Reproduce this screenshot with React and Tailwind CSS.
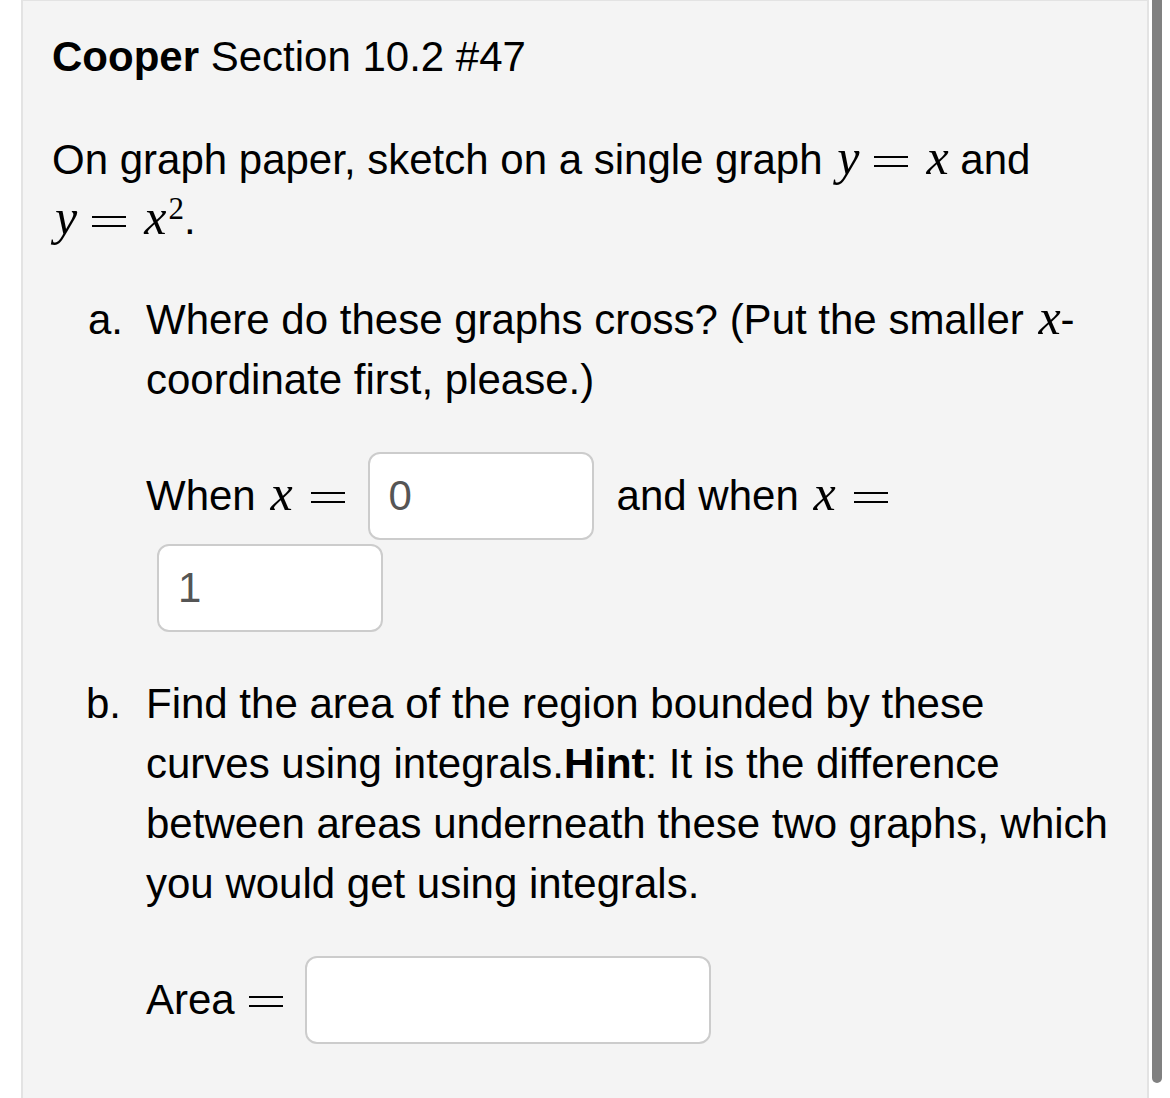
import React from "react";

const M = ({ children }) => (
  <span className="font-['Liberation_Serif',serif] italic text-[50px] leading-none ml-[3px]">
    {children}
  </span>
);

// equals sign drawn like the math font's wide "="
const Eq = ({ className = "mx-[15px]" }) => (
  <span
    className={`inline-block w-[34px] h-[11px] mb-[7px] border-y-[2.5px] border-black align-baseline ${className}`}
  />
);

const Box = ({ value, className = "" }) => (
  <div
    className={`h-[88px] bg-white border-2 border-[#cccccc] rounded-[12px] flex items-center pl-[19px] text-[#555555] ${className}`}
  >
    {value}
  </div>
);

const App = () => {
  return (
    <div className="relative w-[1170px] h-[1098px] bg-white overflow-hidden font-['Liberation_Sans',Arial,sans-serif] text-[42px] leading-[60px] text-black">
      {/* Panel */}
      <div className="ml-[21px] w-[1128px] h-full bg-[#f4f4f4] border-2 border-b-0 border-t border-[#e3e3e3] pl-[29px] pr-[28px]">
        <h1 className="mt-[26px]">
          <span className="font-bold">Cooper</span> Section 10.2 #47
        </h1>

        <p className="mt-[43px]">
          On graph paper, sketch on a single graph <M>y</M>
          <Eq />
          <M>x</M> and
          <br />
          <M>y</M>
          <Eq />
          <M>x</M>
          <span className="font-['Liberation_Serif',serif] text-[31px] leading-none relative -top-[15px] ml-[2px]">2</span>.
        </p>

        {/* Item a */}
        <div className="flex mt-[40px]">
          <div className="w-[94px] shrink-0 pl-[36px]">a.</div>
          <div className="flex-1">
            <p>
              Where do these graphs cross? (Put the smaller <M>x</M>-
              <br />
              coordinate first, please.)
            </p>
            <div className="flex flex-wrap items-center mt-[42px] gap-y-[2px]">
              <span>
                When <M>x</M>
                <Eq className="ml-[18px]" />
              </span>
              <Box value="0" className="w-[226px] ml-[23px] mr-[23px]" />
              <span>
                and when <M>x</M>
                <Eq className="ml-[18px]" />
              </span>
              <div className="basis-full h-0" />
              <Box value="1" className="w-[226px] ml-[11px]" />
            </div>
          </div>
        </div>

        {/* Item b */}
        <div className="flex mt-[42px]">
          <div className="w-[94px] shrink-0 pl-[34px]">b.</div>
          <div className="flex-1">
            <p>
              Find the area of the region bounded by these
              <br />
              curves using integrals.<span className="font-bold">Hint</span>: It is the difference
              <br />
              between areas underneath these two graphs, which
              <br />
              you would get using integrals.
            </p>
            <div className="flex items-center mt-[42px]">
              <span>
                Area
                <Eq className="ml-[14px]" />
              </span>
              <Box value="" className="w-[406px] ml-[22px]" />
            </div>
          </div>
        </div>
      </div>

      {/* Scrollbar */}
      <div className="absolute left-[1152px] top-0 w-[10px] h-[1083px] bg-[#808080] rounded-b-full" />
    </div>
  );
};

export default App;
